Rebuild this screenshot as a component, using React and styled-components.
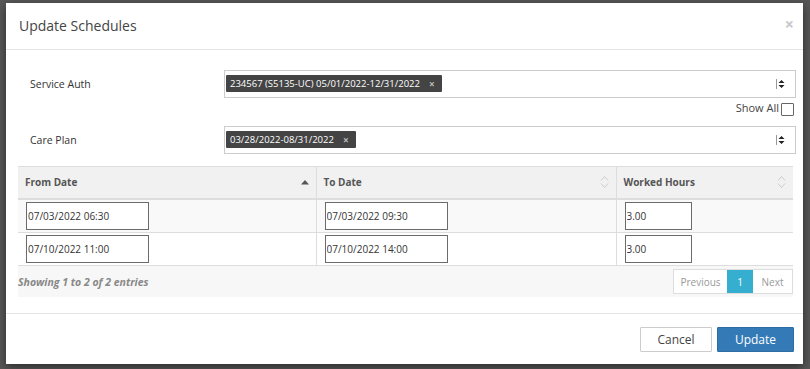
import React from 'react';
import styled, { createGlobalStyle } from 'styled-components';

const GlobalStyle = createGlobalStyle`
  html, body {
    margin: 0;
    padding: 0;
    background: #575757;
    font-family: "Open Sans", "Liberation Sans", sans-serif;
  }
`

const Backdrop = styled.div`
  width: 810px;
  height: 369px;
  overflow: hidden;
  padding: 3px 7px 0 6px;
  box-sizing: border-box;
  background: #575757;
`

const Modal = styled.div`
  width: 797px;
  height: 361px;
  background: #fff;
  box-shadow: 0 3px 9px rgba(0, 0, 0, 0.5);
  display: flex;
  flex-direction: column;
`

const Header = styled.div`
  height: 46px;
  display: flex;
  align-items: center;
  justify-content: space-between;
  padding: 0 9px 0 13px;
  border-bottom: 1px solid #e5e5e5;
`

const Title = styled.h4`
  margin: 0;
  font-size: 14px;
  font-weight: 400;
  color: #444;
`

const Close = styled.span`
  font-size: 16px;
  font-weight: 700;
  color: #c8c8c8;
  line-height: 1;
  margin-top: -3px;
`

const Body = styled.div`
  padding: 20px 7px 16px 12px;
`

const FormRow = styled.div`
  display: grid;
  grid-template-columns: 206px 1fr;
  align-items: center;
`

const Label = styled.label`
  padding-left: 12px;
  font-size: 10.5px;
  color: #333;
`

const Select = styled.div`
  height: 28px;
  box-sizing: border-box;
  border: 1px solid #ccc;
  display: flex;
  align-items: center;
  justify-content: space-between;
  padding: 0 10px 0 1px;
`

const Tag = styled.span`
  display: inline-flex;
  align-items: center;
  gap: 9px;
  height: 17px;
  padding: 0 7px 0 4px;
  background: #444;
  color: #fff;
  font-size: 9.5px;
  border-radius: 1px;
  b {
    color: #bbb;
    font-size: 10px;
  }
`

const ShowAll = styled.div`
  display: flex;
  justify-content: flex-end;
  align-items: center;
  gap: 2px;
  height: 16px;
  margin: 2px 2px 10px 0;
  font-size: 11px;
  color: #444;
`

const Check = styled.span`
  width: 11px;
  height: 11px;
  border: 1px solid #666;
  border-radius: 1px;
  margin-top: 4px;
`

const Table = styled.table`
  width: 775px;
  margin-top: 12px;
  border-collapse: collapse;
  font-size: 10px;
  color: #333;
`

const Th = styled.th`
  height: 33px;
  padding: 0 7px;
  text-align: left;
  font-weight: 700;
  color: #555;
  background: #f1f1f1;
  border-top: 1px solid #ddd;
  border-bottom: 2px solid #ddd;
  border-left: ${p => (p.$first ? 'none' : '1px solid #ddd')};
  width: ${p => p.$w}px;
  box-sizing: border-box;
  > div {
    display: flex;
    justify-content: space-between;
    align-items: center;
  }
`

const Tr = styled.tr`
  background: ${p => (p.$odd ? '#f9f9f9' : '#fff')};
`

const Td = styled.td`
  height: 32px;
  padding: 0 8px;
  border-bottom: 1px solid #ddd;
  border-left: ${p => (p.$first ? 'none' : '1px solid #ddd')};
`

const Input = styled.input`
  width: ${p => p.$w}px;
  height: 28px;
  box-sizing: border-box;
  border: 1px solid #6b6b6b;
  padding: 0 1px;
  font-family: inherit;
  font-size: 10px;
  color: #333;
  display: block;
`

const InfoRow = styled.div`
  width: 775px;
  height: 31px;
  background: #f7f7f7;
  display: flex;
  align-items: center;
  justify-content: space-between;
`

const Info = styled.span`
  font-size: 10.5px;
  font-weight: 700;
  font-style: italic;
  color: #888;
`

const Pager = styled.div`
  display: flex;
  height: 23px;
  border: 1px solid #ddd;
  background: #fff;
`

const Page = styled.span`
  display: flex;
  align-items: center;
  justify-content: center;
  width: ${p => p.$w}px;
  font-size: 10px;
  color: ${p => (p.$active ? '#fff' : '#999')};
  background: ${p => (p.$active ? '#36aed0' : '#fff')};
`

const Footer = styled.div`
  margin-top: auto;
  border-top: 1px solid #e5e5e5;
  height: 51px;
  display: flex;
  justify-content: flex-end;
  align-items: flex-start;
  gap: 5px;
  padding: 13px 9px 0 0;
  box-sizing: border-box;
`

const Button = styled.button`
  height: 25px;
  width: ${p => p.$w}px;
  font-family: inherit;
  font-size: 12px;
  border-radius: 1px;
  border: 1px solid ${p => (p.$primary ? '#2e6da4' : '#ccc')};
  background: ${p => (p.$primary ? '#337ab7' : '#fff')};
  color: ${p => (p.$primary ? '#fff' : '#444')};
`

const SelectArrows = () => (
  <svg width="9" height="10" viewBox="0 0 9 10">
    <rect x="0" y="0" width="1" height="10" fill="#999" />
    <path d="M2.5 4 L5.5 1 L8.5 4 Z M2.5 6 L5.5 9 L8.5 6 Z" fill="#222" />
  </svg>
)

const SortUp = () => (
  <svg width="8" height="6" viewBox="0 0 8 6">
    <path d="M0 5.5 L4 1 L8 5.5 Z" fill="#555" />
  </svg>
)

const SortBoth = () => (
  <svg width="9" height="14" viewBox="0 0 9 14">
    <path d="M1 5.5 L4.5 1.5 L8 5.5 M1 8.5 L4.5 12.5 L8 8.5" fill="none" stroke="#ccc" strokeWidth="1" />
  </svg>
)

const rows = [
  { from: '07/03/2022 06:30', to: '07/03/2022 09:30', hours: '3.00' },
  { from: '07/10/2022 11:00', to: '07/10/2022 14:00', hours: '3.00' },
];

const App = () => {
  return (
    <Backdrop>
      <GlobalStyle />
      <Modal>
        <Header>
          <Title>Update Schedules</Title>
          <Close>×</Close>
        </Header>
        <Body>
          <FormRow>
            <Label>Service Auth</Label>
            <Select>
              <Tag>234567 (S5135-UC) 05/01/2022-12/31/2022 <b>×</b></Tag>
              <SelectArrows />
            </Select>
          </FormRow>
          <ShowAll>Show All <Check /></ShowAll>
          <FormRow>
            <Label>Care Plan</Label>
            <Select>
              <Tag>03/28/2022-08/31/2022 <b>×</b></Tag>
              <SelectArrows />
            </Select>
          </FormRow>
          <Table>
            <thead>
              <tr>
                <Th $first $w={298}><div>From Date <SortUp /></div></Th>
                <Th $w={300}><div>To Date <SortBoth /></div></Th>
                <Th $w={177}><div>Worked Hours <SortBoth /></div></Th>
              </tr>
            </thead>
            <tbody>
              {rows.map((r, i) => (
                <Tr key={i} $odd={i % 2 === 0}>
                  <Td $first><Input $w={123} defaultValue={r.from} /></Td>
                  <Td><Input $w={123} defaultValue={r.to} /></Td>
                  <Td><Input $w={67} defaultValue={r.hours} /></Td>
                </Tr>
              ))}
            </tbody>
          </Table>
          <InfoRow>
            <Info>Showing 1 to 2 of 2 entries</Info>
            <Pager>
              <Page $w={53}>Previous</Page>
              <Page $w={26} $active>1</Page>
              <Page $w={39}>Next</Page>
            </Pager>
          </InfoRow>
        </Body>
        <Footer>
          <Button $w={72}>Cancel</Button>
          <Button $w={77} $primary>Update</Button>
        </Footer>
      </Modal>
    </Backdrop>
  );
};

export default App;
